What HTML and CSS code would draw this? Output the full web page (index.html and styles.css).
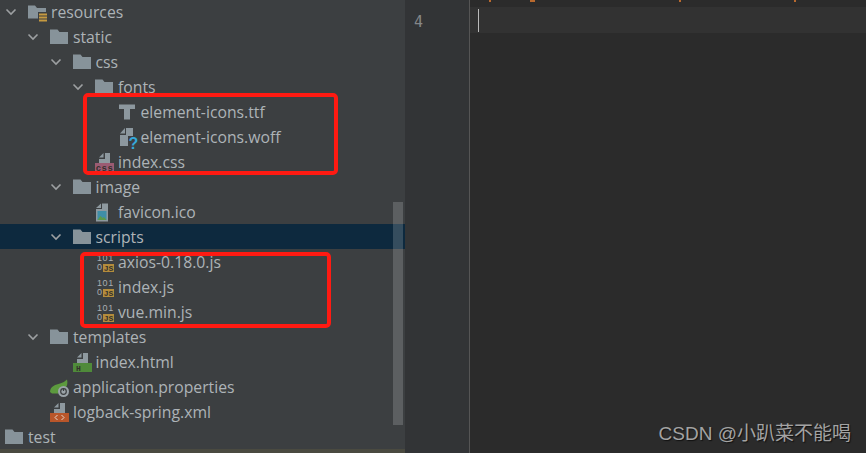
FILE: index.html
```html
<!DOCTYPE html>
<html lang="en">
<head>
<meta charset="utf-8">
<title>Project tree</title>
<link rel="stylesheet" href="styles.css">
</head>
<body>
<svg class="defs" width="0" height="0" aria-hidden="true">
  <symbol id="chev" viewBox="0 0 18 18"><path d="M4.500 6.500 9 11l4.500-4.500" fill="none" stroke="#9da0a2" stroke-width="1.600"/></symbol>
  <symbol id="folder" viewBox="0 0 18 18"><path d="M0 1.500h7.500l2 2.500H18v12H0z" fill="#87939a"/></symbol>
  <symbol id="doc" viewBox="0 0 19 19"><path d="M10 1h5v10H4V7h6z" fill="#8e999f"/><path d="M4 5.500 8.500 1v4.500z" fill="#8e999f"/></symbol>
</svg>
<div class="window">
  <aside class="sidebar">
    <div class="tree">
      <div class="row d0"><svg class="chev"><use href="#chev"/></svg><svg class="ic" viewBox="0 0 18 18"><path d="M0 2.500h7l2 2.500h9v10.500H0z" fill="#87939a"/><path d="M10 9h10v11H10z" fill="#3c3f41"/><path d="M11 10.500h8v2h-8zm0 3h8v2h-8zm0 3h8v2h-8z" fill="#c69a40"/></svg><span>resources</span></div>
      <div class="row d1"><svg class="chev"><use href="#chev"/></svg><svg class="ic"><use href="#folder"/></svg><span>static</span></div>
      <div class="row d2"><svg class="chev"><use href="#chev"/></svg><svg class="ic"><use href="#folder"/></svg><span>css</span></div>
      <div class="row d3"><svg class="chev"><use href="#chev"/></svg><svg class="ic"><use href="#folder"/></svg><span>fonts</span></div>
      <div class="row d4"><i class="gap"></i><svg class="ic" viewBox="0 0 18 18"><path d="M1 1.500h16V6h-5v10.500H6V6H1z" fill="#8c979e"/></svg><span>element-icons.ttf</span></div>
      <div class="row d4"><i class="gap"></i><svg class="ic" viewBox="0 0 18 18"><path d="M8 0h7v18H2V7h6z" fill="#8c979e"/><path d="M2 5.500 7 0v5.500z" fill="#8c979e"/><path d="M10 8h9v13h-9z" fill="#3c3f41"/><text x="10.500" y="20.500" class="q">?</text></svg><span>element-icons.woff</span></div>
      <div class="row d3"><i class="gap"></i><svg class="ic wide" viewBox="0 0 19 19"><use href="#doc" width="19" height="19"/><rect y="11" width="19" height="9" fill="#9b5b72"/><text x="9.500" y="18.500" class="band spaced">css</text></svg><span>index.css</span></div>
      <div class="row d2"><svg class="chev"><use href="#chev"/></svg><svg class="ic"><use href="#folder"/></svg><span>image</span></div>
      <div class="row d3"><i class="gap"></i><svg class="ic" viewBox="0 0 18 18"><path d="M7 .500h6v18H1V6h6z" fill="#8e999f"/><path d="M1 5 6 .500V5z" fill="#8e999f"/><rect x="2.500" y="8" width="9" height="9" fill="#3f8fa8"/><path d="M2.500 17l3-4 2 2 1.500-1 2.500 3z" fill="#5c9a4c"/></svg><span>favicon.ico</span></div>
      <div class="row d2 selected"><svg class="chev"><use href="#chev"/></svg><svg class="ic"><use href="#folder"/></svg><span>scripts</span></div>
      <div class="row d3"><i class="gap"></i><svg class="ic wide" viewBox="0 0 19 19"><text x="2" y="9" class="bin">101</text><text x="2" y="17.500" class="bin">0</text><rect x="8" y="12" width="11" height="8" fill="#b48c3c"/><text x="13.500" y="19" class="band">JS</text></svg><span>axios-0.18.0.js</span></div>
      <div class="row d3"><i class="gap"></i><svg class="ic wide" viewBox="0 0 19 19"><text x="2" y="9" class="bin">101</text><text x="2" y="17.500" class="bin">0</text><rect x="8" y="12" width="11" height="8" fill="#b48c3c"/><text x="13.500" y="19" class="band">JS</text></svg><span>index.js</span></div>
      <div class="row d3"><i class="gap"></i><svg class="ic wide" viewBox="0 0 19 19"><text x="2" y="9" class="bin">101</text><text x="2" y="17.500" class="bin">0</text><rect x="8" y="12" width="11" height="8" fill="#b48c3c"/><text x="13.500" y="19" class="band">JS</text></svg><span>vue.min.js</span></div>
      <div class="row d1"><svg class="chev"><use href="#chev"/></svg><svg class="ic"><use href="#folder"/></svg><span>templates</span></div>
      <div class="row d2"><i class="gap"></i><svg class="ic wide" viewBox="0 0 19 19"><use href="#doc" width="19" height="19"/><rect y="11" width="19" height="9" fill="#4f8a3a"/><text x="5.500" y="18.500" class="band">H</text></svg><span>index.html</span></div>
      <div class="row d1"><i class="gap"></i><svg class="ic wide" viewBox="0 0 19 19"><path d="M0 15C0 9 6 7.500 10 6.500c3-1 5-2 7-4 1 4 0 8-3 9-3 1-5 2-6 5H2z" fill="#5c9a3e"/><circle cx="13.500" cy="14.500" r="5.500" fill="#9aa3a8"/><circle cx="13.500" cy="14.500" r="2.800" fill="none" stroke="#3c3f41" stroke-width="1.200"/><path d="M13.500 11v3" stroke="#3c3f41" stroke-width="1.200"/></svg><span>application.properties</span></div>
      <div class="row d1"><i class="gap"></i><svg class="ic wide" viewBox="0 0 19 19"><use href="#doc" width="19" height="19"/><rect y="11" width="19" height="9" fill="#b9562a"/><path d="M7.500 13l-2.500 2.500L7.500 18m4-5 2.500 2.500-2.500 2.500" fill="none" stroke="#e8d8cc" stroke-width="1"/></svg><span>logback-spring.xml</span></div>
      <div class="row root"><svg class="ic"><use href="#folder"/></svg><span>test</span></div>
    </div>
    <div class="strip"></div>
    <div class="scrollbar"></div>
    <div class="mark mark-fonts"></div>
    <div class="mark mark-scripts"></div>
  </aside>
  <div class="gutter"><span class="lineno">4</span></div>
  <main class="editor">
    <i class="clip clip-a"></i><i class="clip clip-b"></i><i class="clip clip-c"></i><i class="clip clip-d"></i>
    <div class="caret-line"><i class="caret"></i></div>
    <p class="watermark">CSDN @小趴菜不能喝</p>
  </main>
</div>
</body>
</html>
```

FILE: styles.css
```css
html, body { margin: 0; height: 100%; overflow: hidden; background: #2b2b2b; }
.defs { position: absolute; }
.window { display: flex; height: 453px; position: relative; }

.sidebar { width: 405px; flex: none; background: #3c3f41; position: relative; overflow: hidden; }
.tree { margin-top: -1px; font: 15.750px/25px "Open Sans", "Noto Sans", sans-serif; color: #adb3b7; }
.row { display: flex; align-items: center; height: 25px; white-space: nowrap; }
.row span { margin-left: 5px; padding-top: 2px; line-height: 23px; }
.selected { background: #0d293e; }
.d0 { padding-left: 2px; }
.d1 { padding-left: 24px; }
.d2 { padding-left: 46.500px; }
.d3 { padding-left: 69px; }
.d4 { padding-left: 91.500px; }
.root { padding-left: 5px; }
.chev { width: 18px; height: 18px; flex: none; margin-right: 8px; }
.gap { width: 26px; flex: none; }
.ic { width: 18px; height: 18px; flex: none; overflow: visible; }
.ic.wide { width: 19px; height: 19px; margin-right: -1px; }
.strip { height: 4px; background: #4a4a40; }

.q { font: 700 16px "Liberation Sans", sans-serif; fill: #35a7d8; }
.band { font: 700 8px "Liberation Mono", monospace; text-anchor: middle; fill: #33302c; }
.spaced { font-size: 9px; letter-spacing: .5px; }
.bin { font: 9px "Liberation Sans", sans-serif; fill: #a9aeb1; letter-spacing: .6px; }

.scrollbar { position: absolute; left: 393px; top: 202px; width: 10px; height: 223px; background: rgba(255, 255, 255, .17); }
.mark { position: absolute; box-sizing: border-box; border: 4px solid #ff1a12; border-radius: 5px; }
.mark-fonts { left: 83px; top: 93px; width: 255px; height: 82px; }
.mark-scripts { left: 80px; top: 252px; width: 251px; height: 76px; }

.gutter { width: 64px; flex: none; background: #323436; border-right: 1px solid #555; position: relative; }
.lineno { position: absolute; left: 9px; top: 12px; font: 15px/20px "DejaVu Sans Mono", monospace; color: #858789; }

.editor { flex: 1; position: relative; }
.clip { position: absolute; top: 0; width: 2px; height: 2px; background: #b8692e; }
.clip-a { left: 19px; }
.clip-b { left: 60px; width: 5px; }
.clip-c { left: 209px; }
.clip-d { left: 324px; }
.caret-line { margin-top: 7px; height: 26px; background: #323232; position: absolute; left: 0; right: 0; }
.caret { display: block; position: relative; left: 8px; top: 2px; width: 1px; height: 23px; background: #bbb; }
.watermark { position: absolute; right: 15px; bottom: 7px; margin: 0; font: 19px/24px "Liberation Sans", "Noto Sans CJK SC", sans-serif; color: #a3a3a3; text-shadow: 1px 1px 1px #111; }
```
